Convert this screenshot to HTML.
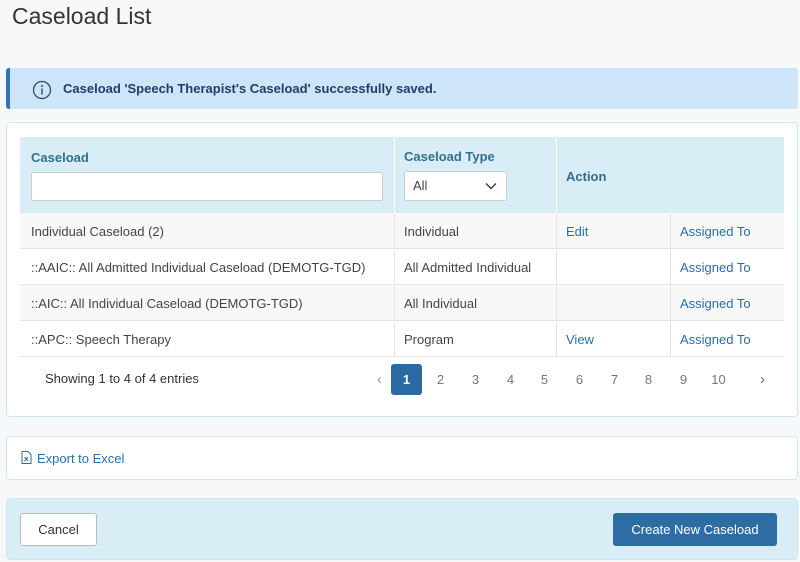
<!DOCTYPE html>
<html><head><style>
*{box-sizing:border-box;margin:0;padding:0}
body{width:800px;height:562px;background:#f7f8fa;font-family:"Liberation Sans",Arial,sans-serif;position:relative;overflow:hidden;color:#333}
.a{position:absolute}
h1{position:absolute;left:12px;top:3px;font-weight:normal;font-size:23px;color:#333}
.alert{left:6px;top:68px;width:792px;height:41px;background:#cde4f9;border-left:4px solid #2a76b7;border-radius:3px}
.card{background:#fff;border:1px solid #cfe6f2;border-radius:4px}
.th{background:#d9edf7;color:#31708f;font-weight:bold;font-size:13px}
.row{left:20px;width:764px;height:36px;border-bottom:1px solid #e4e4e4;font-size:13px;color:#444}
.row div{position:absolute;top:1px;height:35px;line-height:35px;padding-left:9px;border-left:1px solid #e4e4e4}
.row div:first-child{padding-left:11px}
.lnk{color:#2a6ea8}
.pg{position:absolute;top:364px;width:31px;height:31px;line-height:31px;text-align:center;font-size:13px;color:#777}
</style></head><body>
<h1>Caseload List</h1>
<div class="a alert">
<svg class="a" style="left:22px;top:12px" width="20" height="20" viewBox="0 0 20 20"><circle cx="10" cy="10" r="8.5" fill="none" stroke="#2b4f73" stroke-width="1.3"/><circle cx="10" cy="6" r="1" fill="#2b4f73"/><rect x="9.3" y="8.5" width="1.4" height="6" fill="#2b4f73"/></svg>
<div class="a" style="left:53px;top:13px;font-size:13px;font-weight:bold;color:#1f3f66">Caseload 'Speech Therapist's Caseload' successfully saved.</div>
</div>
<div class="a card" style="left:6px;top:122px;width:792px;height:295px"></div>
<div class="a th" style="left:20px;top:137px;width:764px;height:76px"></div>
<div class="a" style="left:394px;top:137px;width:1px;height:76px;background:#fff"></div>
<div class="a" style="left:556px;top:137px;width:1px;height:76px;background:#fff"></div>
<div class="a th" style="left:31px;top:150px;background:none">Caseload</div>
<div class="a" style="left:31px;top:172px;width:352px;height:29px;background:#fff;border:1px solid #ccc;border-radius:2px"></div>
<div class="a th" style="left:404px;top:149px;background:none">Caseload Type</div>
<div class="a" style="left:404px;top:171px;width:103px;height:30px;background:#fff;border:1px solid #ccc;border-radius:3px;font-size:13px;line-height:28px;padding-left:8px;color:#444">All
<svg class="a" style="left:80px;top:10px" width="12" height="8" viewBox="0 0 12 8"><path d="M1 1.5L6 6.5L11 1.5" fill="none" stroke="#444" stroke-width="1.5"/></svg></div>
<div class="a th" style="left:566px;top:169px;background:none">Action</div>

<div class="a row" style="top:213px;background:#f8f8f8"><div style="left:0;border:0">Individual Caseload (2)</div><div style="left:374px;width:162px">Individual</div><div class="lnk" style="left:536px;width:114px">Edit</div><div class="lnk" style="left:650px;width:114px">Assigned To</div></div>
<div class="a row" style="top:249px;background:#fff"><div style="left:0;border:0">::AAIC:: All Admitted Individual Caseload (DEMOTG-TGD)</div><div style="left:374px;width:162px">All Admitted Individual</div><div style="left:536px;width:114px"></div><div class="lnk" style="left:650px;width:114px">Assigned To</div></div>
<div class="a row" style="top:285px;background:#f8f8f8"><div style="left:0;border:0">::AIC:: All Individual Caseload (DEMOTG-TGD)</div><div style="left:374px;width:162px">All Individual</div><div style="left:536px;width:114px"></div><div class="lnk" style="left:650px;width:114px">Assigned To</div></div>
<div class="a row" style="top:321px;background:#fff"><div style="left:0;border:0">::APC:: Speech Therapy</div><div style="left:374px;width:162px">Program</div><div class="lnk" style="left:536px;width:114px">View</div><div class="lnk" style="left:650px;width:114px">Assigned To</div></div>

<div class="a" style="left:45px;top:371px;font-size:13px;color:#333">Showing 1 to 4 of 4 entries</div>
<div class="pg" style="left:364px;font-size:15px;color:#999">‹</div>
<div class="pg" style="left:391px;background:#2c6aa4;color:#fff;border-radius:3px;font-weight:bold">1</div>
<div class="pg" style="left:425px">2</div><div class="pg" style="left:460px">3</div><div class="pg" style="left:495px">4</div><div class="pg" style="left:529px">5</div><div class="pg" style="left:564px">6</div><div class="pg" style="left:599px">7</div><div class="pg" style="left:633px">8</div><div class="pg" style="left:668px">9</div><div class="pg" style="left:703px">10</div>
<div class="pg" style="left:747px;font-size:15px;color:#666">›</div>

<div class="a card" style="left:6px;top:436px;width:792px;height:44px"></div>
<svg class="a" style="left:21px;top:451px" width="11" height="13" viewBox="0 0 11 13"><path d="M1 .5H7L10 3.5V12.5H1Z" fill="none" stroke="#2a6ea8"/><path d="M3.5 6L7 10M7 6L3.5 10" stroke="#2a6ea8"/></svg>
<div class="a lnk" style="left:37px;top:451px;font-size:13px">Export to Excel</div>

<div class="a" style="left:6px;top:498px;width:792px;height:62px;background:#d9edf7;border:1px solid #cfe6f2;border-radius:4px"></div>
<div class="a" style="left:20px;top:513px;width:77px;height:33px;background:#fff;border:1px solid #bbb;border-radius:3px;font-size:13px;text-align:center;line-height:31px;color:#333">Cancel</div>
<div class="a" style="left:613px;top:513px;width:164px;height:33px;background:#2e6da4;border-radius:3px;font-size:13px;text-align:center;line-height:33px;color:#fff">Create New Caseload</div>
</body></html>
